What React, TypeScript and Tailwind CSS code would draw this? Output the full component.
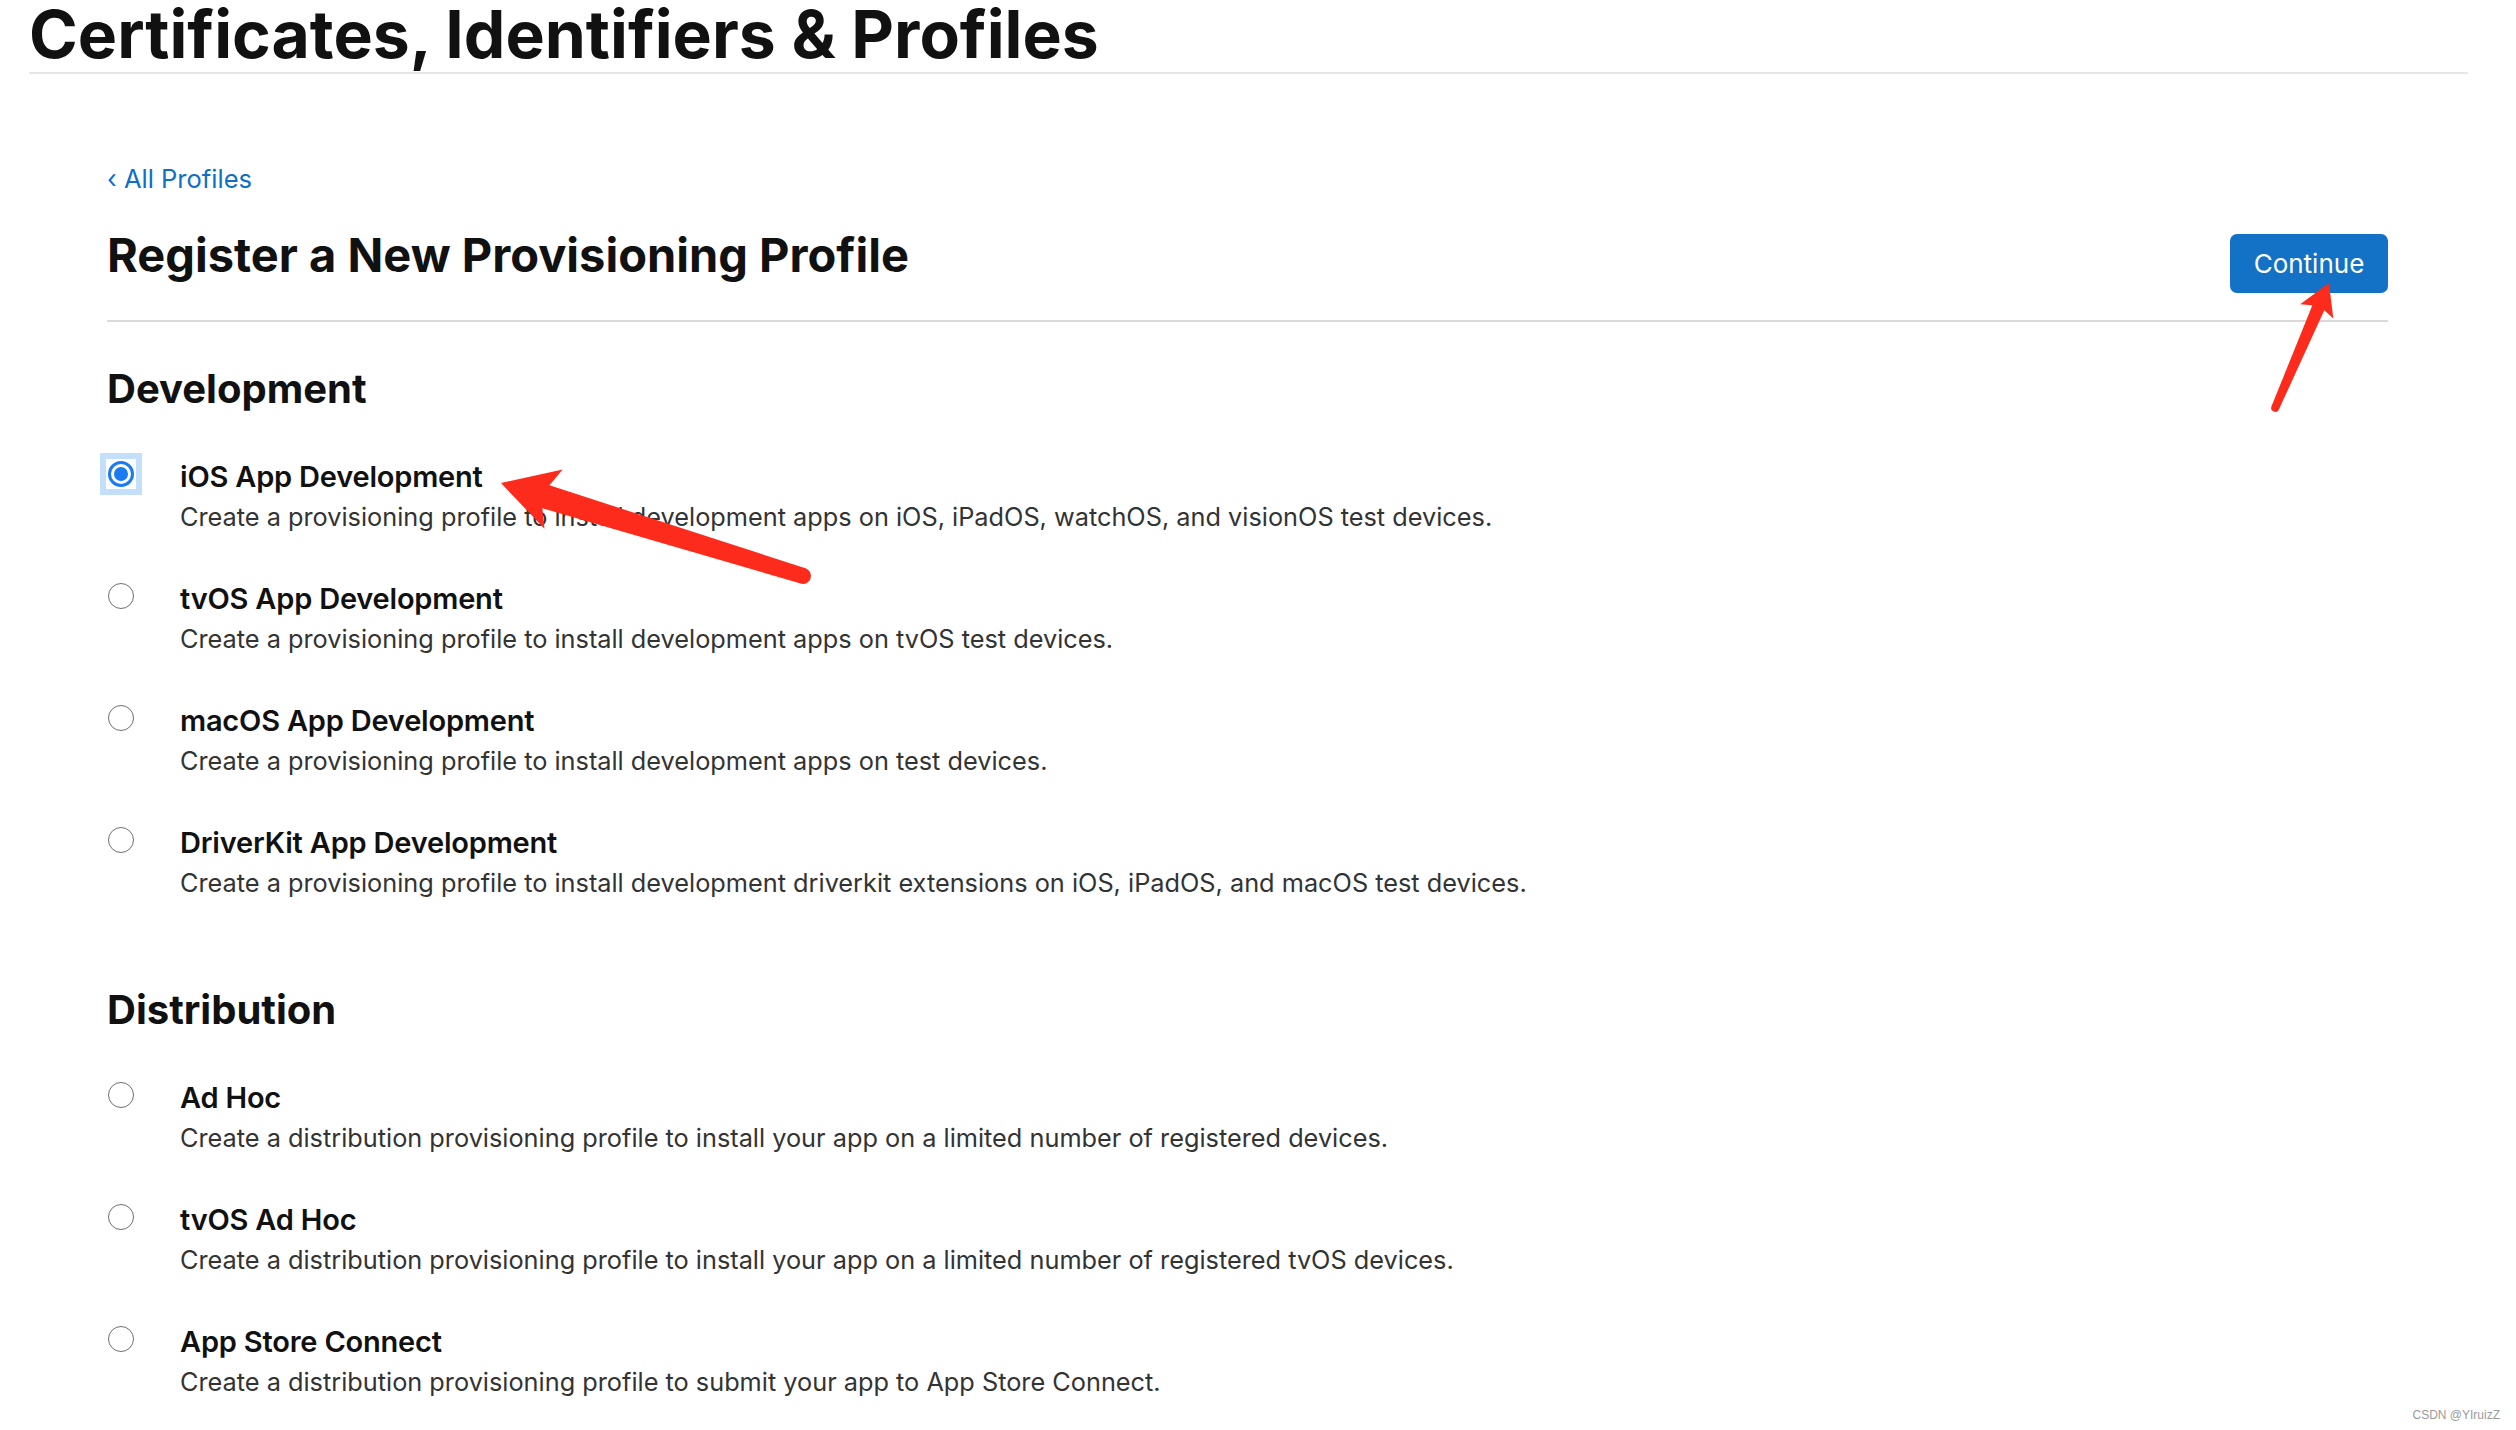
type Option = { title: string; desc: string; checked?: boolean };

const development: Option[] = [
  {
    title: 'iOS App Development',
    desc: 'Create a provisioning profile to install development apps on iOS, iPadOS, watchOS, and visionOS test devices.',
    checked: true,
  },
  { title: 'tvOS App Development', desc: 'Create a provisioning profile to install development apps on tvOS test devices.' },
  { title: 'macOS App Development', desc: 'Create a provisioning profile to install development apps on test devices.' },
  {
    title: 'DriverKit App Development',
    desc: 'Create a provisioning profile to install development driverkit extensions on iOS, iPadOS, and macOS test devices.',
  },
];

const distribution: Option[] = [
  { title: 'Ad Hoc', desc: 'Create a distribution provisioning profile to install your app on a limited number of registered devices.' },
  {
    title: 'tvOS Ad Hoc',
    desc: 'Create a distribution provisioning profile to install your app on a limited number of registered tvOS devices.',
  },
  { title: 'App Store Connect', desc: 'Create a distribution provisioning profile to submit your app to App Store Connect.' },
];

function Radio({ checked }: { checked?: boolean }) {
  if (checked) {
    return (
      <div className="w-[30px] h-[30px] bg-white shadow-[0_0_0_6px_#c4dffa] flex items-center justify-center">
        <div className="w-[26px] h-[26px] rounded-full border-[3px] border-[#1a7bf2] flex items-center justify-center">
          <div className="w-[14px] h-[14px] rounded-full bg-[#1a7bf2]" />
        </div>
      </div>
    );
  }
  return (
    <div className="w-[30px] h-[30px] flex items-center justify-center">
      <div className="w-[26px] h-[26px] rounded-full border-[1.5px] border-[#6f6f6f] bg-white" />
    </div>
  );
}

function OptionRow({ opt }: { opt: Option }) {
  return (
    <label className="flex items-start">
      <div className="w-[74px] shrink-0 -ml-[1px] pr-[1px]">
        <Radio checked={opt.checked} />
      </div>
      <div>
        <div className="text-[29px] leading-[36px] font-semibold tracking-[-0.2px] text-[#111]">{opt.title}</div>
        <div className="mt-[6px] text-[25.3px] leading-[32px] text-[#333]">{opt.desc}</div>
      </div>
    </label>
  );
}

function Section({ title, options, className }: { title: string; options: Option[]; className: string }) {
  return (
    <section className={className}>
      <h3 className="text-[40px] leading-[46px] font-bold text-[#111]">{title}</h3>
      <div className="mt-[47px] flex flex-col gap-[48px]">
        {options.map((o) => (
          <OptionRow key={o.title} opt={o} />
        ))}
      </div>
    </section>
  );
}

export default function App() {
  return (
    <div className="relative min-h-screen w-full overflow-hidden bg-white font-['Inter',sans-serif] text-[#111]">
      <header className="ml-[29px] mr-[48px] pb-[4px] border-b-2 border-[#e6e6e6]">
        <h1 className="text-[66px] leading-[68px] font-bold">Certificates, Identifiers &amp; Profiles</h1>
      </header>

      <main className="pl-[107px] pr-[128px]">
        <a className="mt-[90px] block text-[25.5px] leading-[30px] text-[#0f6fc6]">‹ All Profiles</a>

        <div className="mt-[33px] flex items-start justify-between">
          <h2 className="text-[47px] leading-[56px] font-bold">Register a New Provisioning Profile</h2>
          <button className="mt-[7px] w-[158px] h-[59px] rounded-[7px] bg-[#1371c6] text-[26px] text-white">
            Continue
          </button>
        </div>
        <div className="mt-[27px] h-[2px] bg-[#dadada]" />

        <Section title="Development" options={development} className="mt-[44px]" />
        <Section title="Distribution" options={distribution} className="mt-[88px]" />
      </main>

      {/* red annotation arrows over the page */}
      <svg className="pointer-events-none absolute inset-0" width="2516" height="1430" viewBox="0 0 2516 1430">
        <g transform="translate(501 483) rotate(17.1)" fill="#fc2b1c">
          <polygon points="0,0 55,-31 47,-12 316,-8 316,8 47,12 55,31" />
          <circle cx="316" cy="0" r="8" />
        </g>
        <g transform="translate(2329 283) rotate(113.3)" fill="#fc2b1c">
          <polygon points="0,0 31,-18 27,-6.5 136,-4 136,4 27,6.5 31,18" />
          <circle cx="136" cy="0" r="4" />
        </g>
      </svg>

      <div className="absolute right-[16px] bottom-[6px] font-['Liberation_Sans',sans-serif] text-[12px] text-[#9a9a9a]">
        CSDN @YIruizZ
      </div>
    </div>
  );
}
